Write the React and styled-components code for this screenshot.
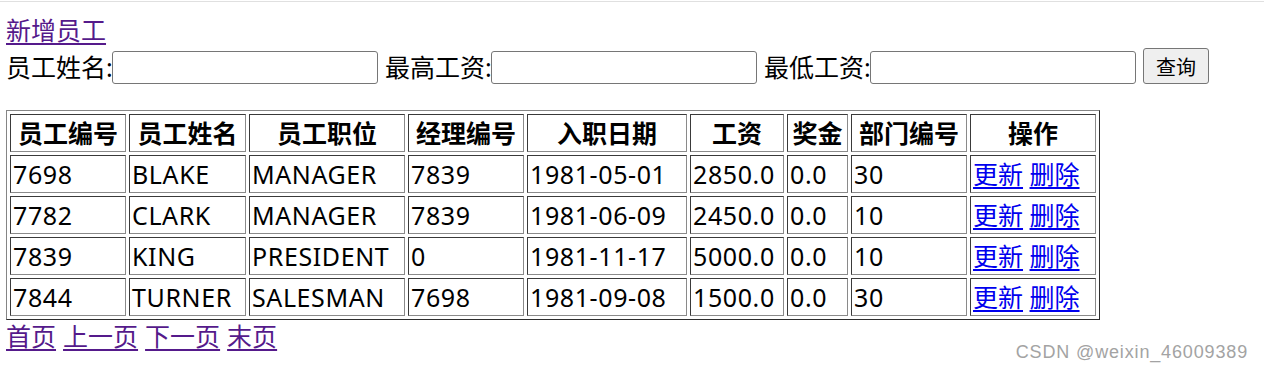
import styled, { createGlobalStyle } from "styled-components"

const GlobalStyle = createGlobalStyle`
    html, body {
        margin: 0;
        padding: 0;
        background: #ffffff;
    }
    body {
        font-family: "Noto Sans", "Noto Sans CJK SC", sans-serif;
        font-size: 25px;
        color: #000000;
    }
`

// dados
const colunas = [
    { titulo: "员工编号", largura: 116 },
    { titulo: "员工姓名", largura: 117 },
    { titulo: "员工职位", largura: 156 },
    { titulo: "经理编号", largura: 116 },
    { titulo: "入职日期", largura: 160 },
    { titulo: "工资", largura: 94 },
    { titulo: "奖金", largura: 61 },
    { titulo: "部门编号", largura: 116 },
    { titulo: "操作", largura: 126 },
]

const funcionarios = [
    ["7698", "BLAKE", "MANAGER", "7839", "1981-05-01", "2850.0", "0.0", "30"],
    ["7782", "CLARK", "MANAGER", "7839", "1981-06-09", "2450.0", "0.0", "10"],
    ["7839", "KING", "PRESIDENT", "0", "1981-11-17", "5000.0", "0.0", "10"],
    ["7844", "TURNER", "SALESMAN", "7698", "1981-09-08", "1500.0", "0.0", "30"],
]

const filtros = ["员工姓名:", "最高工资:", "最低工资:"]

const paginas = ["首页", "上一页", "下一页", "末页"]

export default function App() {
    return (
        <>
            <GlobalStyle />
            <TopLine />
            <Page>
                <LinkLine>
                    <Link href="#" $visited>新增员工</Link>
                </LinkLine>

                <SearchForm onSubmit={(e) => e.preventDefault()}>
                    {filtros.map((rotulo) => (
                        <Field key={rotulo}>
                            <Label>{rotulo}</Label>
                            <Input type="text" />
                        </Field>
                    ))}
                    <Button type="submit">查询</Button>
                </SearchForm>

                <Table>
                    <thead>
                        <tr>
                            {colunas.map((col) => (
                                <Th key={col.titulo} $w={col.largura}>{col.titulo}</Th>
                            ))}
                        </tr>
                    </thead>
                    <tbody>
                        {funcionarios.map((linha) => (
                            <tr key={linha[0]}>
                                {linha.map((valor, i) => <Td key={i} $latin>{valor}</Td>)}
                                <Td>
                                    <Link href="#">更新</Link> <Link href="#">删除</Link>
                                </Td>
                            </tr>
                        ))}
                    </tbody>
                </Table>

                <Pager>
                    {paginas.map((p, i) => (
                        <span key={p}>
                            <Link href="#" $visited>{p}</Link>{i < paginas.length - 1 ? " " : ""}
                        </span>
                    ))}
                </Pager>
            </Page>
            <Watermark>CSDN @weixin_46009389</Watermark>
        </>
    )
}

const TopLine = styled.div`
    height: 1px;
    margin-top: 1px;
    background: #e0e0e0;
`

const Page = styled.main`
    padding: 12px 0 0 6px;
`

const LinkLine = styled.div`
    height: 33px;
    line-height: 33px;
`

const Link = styled.a`
    color: ${(p) => (p.$visited ? "#551a8b" : "#0000ee")};
    text-decoration: underline;
    text-underline-offset: 3px;
`

const SearchForm = styled.form`
    display: flex;
    align-items: center;
    gap: 7px;
    height: 40px;
    margin: 0;
`

const Field = styled.div`
    display: flex;
    align-items: center;
`

const Label = styled.span`
    display: inline-block;
    width: 106px;
    line-height: 32px;
    white-space: nowrap;
`

const Input = styled.input`
    box-sizing: border-box;
    width: 266px;
    height: 33px;
    border: 1px solid #767676;
    border-radius: 3px;
    background: #ffffff;
    padding: 1px 3px;
    font-size: 20px;
`

const Button = styled.button`
    box-sizing: border-box;
    width: 66px;
    height: 36px;
    margin-top: -2px;
    border: 1px solid #767676;
    border-radius: 3px;
    background: #efefef;
    font-family: "Noto Sans CJK SC", sans-serif;
    font-size: 20px;
    color: #000000;
    padding: 0;
`

const Table = styled.table`
    margin-top: 23px;
    border-collapse: separate;
    border-spacing: 3px;
    border: 1px solid;
    border-color: #858585 #2e2e2e #2e2e2e #858585;
`

const cellBase = `
    box-sizing: border-box;
    height: 38px;
    padding: 2px 2px;
    line-height: 32px;
    border: 1px solid;
    border-color: #3a3a3a #8a8a8a #8a8a8a #3a3a3a;
    white-space: nowrap;
`

const Th = styled.th`
    ${cellBase}
    width: ${(p) => p.$w}px;
    font-weight: 700;
    text-align: center;
`

const Td = styled.td`
    ${cellBase}
    text-align: left;
    letter-spacing: ${(p) => (p.$latin ? "0.6px" : "0")};
`

const Pager = styled.div`
    line-height: 32px;
    height: 32px;
    word-spacing: 0.5px;
`

const Watermark = styled.div`
    position: absolute;
    right: 16px;
    top: 342px;
    font-family: "Liberation Sans", Arial, sans-serif;
    font-size: 18px;
    color: #a3a3a3;
    letter-spacing: 0.85px;
`
